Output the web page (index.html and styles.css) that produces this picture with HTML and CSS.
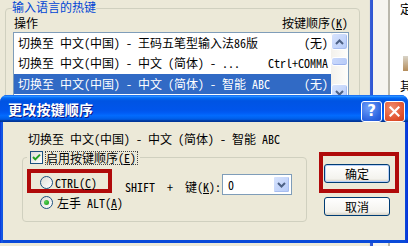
FILE: index.html
```html
<!DOCTYPE html>
<html lang="zh-CN">
<head>
<meta charset="utf-8">
<title>更改按键顺序</title>
<link rel="stylesheet" href="styles.css">
</head>
<body>
<div class="desk">
  <div class="mainwin">
    <fieldset class="hotkeys">
      <legend>输入语言的热键</legend>
      <div class="hdr"><span class="hdr-l">操作</span><span class="hdr-r">按键顺序(<u>K</u>)</span></div>
      <div class="list">
        <div class="rows">
          <div class="row"><span>切换至 中文(中国) - 王码五笔型输入法86版</span><span>(无)</span></div>
          <div class="row"><span>切换至 中文(中国) - 中文 (简体) - ...</span><span>Ctrl+COMMA</span></div>
          <div class="row sel"><span>切换至 中文(中国) - 中文 (简体) - 智能 ABC</span><span>(无)</span></div>
        </div>
        <div class="vscroll">
          <div class="sbtn"><svg width="9" height="6" viewBox="0 0 9 6"><path d="M1 5 L4.5 1.5 L8 5" fill="none" stroke="#4D6185" stroke-width="2"/></svg></div>
          <div class="strack"><div class="thumb"></div></div>
          <div class="sbtn"><svg width="9" height="6" viewBox="0 0 9 6"><path d="M1 1 L4.5 4.5 L8 1" fill="none" stroke="#4D6185" stroke-width="2"/></svg></div>
        </div>
      </div>
    </fieldset>
  </div>
  <div class="edge"></div>
  <div class="side">
    <div class="pane"></div>
    <div class="pane2"><span class="c1">定</span><span class="ico"></span><span class="c2">其</span></div>
  </div>
</div>
<div class="dialog">
  <div class="titlebar">
    <span class="title">更改按键顺序</span>
    <span class="tbtn help">?</span>
    <span class="tbtn close"><svg width="11" height="11" viewBox="0 0 11 11"><path d="M1.5 1.5 L9.5 9.5 M9.5 1.5 L1.5 9.5" stroke="#fff" stroke-width="2.2" stroke-linecap="square"/></svg></span>
  </div>
  <div class="dbody">
    <div class="msg">切换至 中文(中国) - 中文 (简体) - 智能 ABC</div>
    <div class="main">
      <fieldset class="seq">
        <legend><span class="chk"><svg width="11" height="11" viewBox="0 0 11 11"><path d="M2 5 L4.3 7.4 L9 2.6" fill="none" stroke="#21A121" stroke-width="2"/></svg></span><span class="focus">启用按键顺序(<u>E</u>)</span></legend>
        <div class="seqrow">
          <div class="radios">
            <div class="mark"><div class="ritem"><span class="radio"></span><span>CTRL(<u>C</u>)</span></div></div>
            <div class="ritem r2"><span class="radio on"></span><span>左手 ALT(<u>A</u>)</span></div>
          </div>
          <div class="keypart"><span class="keylbl">SHIFT  +  键(<u>K</u>):</span><div class="combo"><span class="cval">0</span><span class="ddbtn"><svg width="9" height="6" viewBox="0 0 9 6"><path d="M1 1 L4.5 4.5 L8 1" fill="none" stroke="#4D6185" stroke-width="2"/></svg></span></div></div>
        </div>
      </fieldset>
      <div class="btncol">
        <div class="mark2"><button class="btn def">确定</button></div>
        <button class="btn">取消</button>
      </div>
    </div>
  </div>
</div>
</body>
</html>
```
FILE: styles.css
```css
* { box-sizing: border-box; }
html, body { margin: 0; padding: 0; }
body {
  width: 408px; height: 246px; overflow: hidden; position: relative;
  background: #ECE9D8;
  font-family: "Noto Sans Mono CJK SC", "Noto Sans CJK SC", monospace;
  font-size: 12px; color: #000;
}
u { text-decoration: underline; text-underline-offset: 1px; }

/* background window */
.desk { display: flex; height: 246px; }
.mainwin { width: 369px; flex: none; padding-left: 5px; background: #ECE9D8; }
.hotkeys {
  margin: 0; width: 355px; height: 200px; min-width: 0;
  border: 1px solid #D0D0BF; border-radius: 4px;
  padding: 0 10px 0 7px;
}
.hotkeys legend { padding: 0; margin-left: -1px; color: #0046D5; line-height: 14px; height: 16px; }
.hdr { display: flex; justify-content: space-between; line-height: 14px; margin: 0 0 2px; padding-left: 1px; padding-right: 1px; }
.list { display: flex; border: 1px solid #7F9DB9; background: #fff; height: 70px; }
.rows { flex: 1; }
.row { display: flex; justify-content: space-between; height: 20px; line-height: 20px; padding: 0 3px 0 4px; white-space: pre; }
.row.sel { background: #316AC5; color: #fff; margin-top: 1px; }
.vscroll { width: 17px; display: flex; flex-direction: column; background: linear-gradient(90deg, #F3F1EC, #FEFEFB); }
.sbtn {
  height: 17px; flex: none; display: flex; align-items: center; justify-content: center;
  border: 1px solid #fff; border-radius: 3px;
  background: linear-gradient(135deg, #D7E3FD, #B6CBF9);
  box-shadow: inset -1px -1px 0 #A8BEF0;
}
.strack { flex: 1; padding: 7px 0 0; }
.thumb { height: 9px; border: 1px solid #fff; border-radius: 3px; background: linear-gradient(90deg, #C9D8FC, #B8CCF8); box-shadow: inset 0 -1px 0 #9CB3EE; }

.edge { width: 4px; flex: none; background: linear-gradient(90deg, #E4E2D6 0, #E4E2D6 1px, #3A5FD6 1px, #2C54D2 100%); }
.side { flex: 1; display: flex; background: #fff; }
.pane { width: 17px; flex: none; background: #F5F4EF; border-right: 2px solid #B9B7AC; }
.pane2 { flex: 1; display: flex; flex-direction: column; padding: 2px 0 0 10px; overflow: hidden; }
.c1 { line-height: 14px; font-size: 12px; }
.ico { width: 8px; height: 15px; margin: 40px 0 0 3px; background: linear-gradient(#D9D4C8, #B48C5A); }
.c2 { line-height: 14px; margin-top: 8px; }

/* dialog */
.dialog {
  position: absolute; left: 0; top: 95px; width: 408px; height: 148px;
  display: flex; flex-direction: column;
  border-radius: 7px 7px 0 0;
  background: linear-gradient(90deg, #0831D9, #1661E8 2px, #0A4AD9 3px, #0A4AD9 calc(100% - 3px), #0831D9);
}
.titlebar {
  height: 27px; flex: none; display: flex; align-items: flex-start;
  padding: 0 3px 0 8px; border-radius: 7px 7px 0 0;
  background: linear-gradient(#0058EE 0%, #3593FF 4%, #288EFF 6%, #127DFF 8%, #036FFC 10%, #0262EE 14%, #0057E5 20%, #0054E3 24%, #0055EB 56%, #005BF5 66%, #026AFE 76%, #0062EF 86%, #0052D6 92%, #0040AB 94%, #003092 100%);
}
.title {
  flex: 1; color: #fff; font-family: "Noto Sans CJK SC", sans-serif; font-weight: bold; font-size: 14px;
  line-height: 16px; margin-top: 6px; letter-spacing: 0.2px; text-shadow: 1px 1px 0 #0A1883;
}
.tbtn {
  width: 21px; height: 21px; margin-top: 6px; margin-left: 2px; flex: none;
  border: 1px solid #fff; border-radius: 3px;
  display: flex; align-items: center; justify-content: center;
}
.help {
  background: radial-gradient(circle at 35% 30%, #6FA0FA, #2B63E0 70%, #1F50CF);
  color: #fff; font-family: "DejaVu Sans", sans-serif; font-weight: bold; font-size: 15px; line-height: 19px;
}
.close { background: radial-gradient(circle at 35% 30%, #F08A6C, #E0502C 70%, #C8401E); }
.dbody { flex: 1; margin: 0 3px 3px; background: #ECE9D8; padding: 10px 0 0 19px; display: flex; flex-direction: column; }
.msg { line-height: 14px; padding-left: 6px; white-space: pre; }
.main { display: flex; margin-top: 5px; }
.seq {
  margin: 0; width: 285px; height: 71px; min-width: 0;
  border: 1px solid #D0D0BF; border-radius: 4px; padding: 0 0 0 4px;
}
.seq legend { padding: 0 2px 0 3px; height: 13px; display: flex; align-items: center; }
.chk {
  width: 13px; height: 13px; border: 1px solid #1C5180; display: flex; align-items: center; justify-content: center;
  background: linear-gradient(135deg, #DCDCD7, #FFFFFF);
}
.focus { margin-left: 2px; line-height: 12px; height: 14px; border: 1px dotted #444; padding: 0 1px 0 0; white-space: pre; display: flex; align-items: center; }
.seqrow { display: flex; margin-top: 5px; }
.radios { width: 98px; flex: none; display: flex; flex-direction: column; }
.mark { align-self: flex-start; border: 4px solid #B00A0A; padding: 3px 11px 0 9px; }
.ritem { display: flex; align-items: center; height: 13px; line-height: 13px; white-space: pre; }
.ritem .radio { margin-right: 2px; }
.r2 { margin-top: 3px; padding-left: 13px; }
.r2 .radio { margin-right: 4px; }
.radio {
  width: 13px; height: 13px; border-radius: 50%; border: 1px solid #1C5180; flex: none;
  background: linear-gradient(135deg, #DCDCD7, #FFFFFF);
  display: flex; align-items: center; justify-content: center;
}
.radio.on::after { content: ""; width: 5px; height: 5px; border-radius: 50%; background: radial-gradient(circle at 35% 35%, #55D455, #21A121 80%); }
.keypart { display: flex; align-items: center; margin-top: 5px; height: 21px; align-self: flex-start; }
.keylbl { white-space: pre; line-height: 14px; margin-top: 4px; }
.combo {
  margin-left: 1px; width: 70px; height: 21px; border: 1px solid #7F9DB9; background: #fff;
  display: flex; align-items: center; justify-content: space-between; padding: 0 1px 0 5px;
}
.cval { line-height: 14px; }
.ddbtn {
  width: 17px; height: 17px; border: 1px solid #fff; border-radius: 2px;
  background: linear-gradient(135deg, #D7E3FD, #B6CBF9); box-shadow: inset -1px -1px 0 #A8BEF0;
  display: flex; align-items: center; justify-content: center;
}
.btncol { margin-left: 12px; margin-top: 1px; display: flex; flex-direction: column; align-items: flex-start; }
.mark2 { border: 4px solid #B00A0A; width: 80px; height: 41px; padding: 8px 0 0 1px; }
.btn {
  width: 66px; height: 19px; margin: 0; padding: 0;
  border: 1px solid #003C74; border-radius: 3px;
  background: linear-gradient(#FFFFFF, #F4F3EE 80%, #D8D4C8);
  font-family: "Noto Sans CJK SC", sans-serif; font-size: 12px; line-height: 16px; color: #000;
}
.btn.def { box-shadow: inset 0 0 0 1px #B8D0F8; }
.btncol > .btn { margin-top: 4px; margin-left: 5px; }
```
